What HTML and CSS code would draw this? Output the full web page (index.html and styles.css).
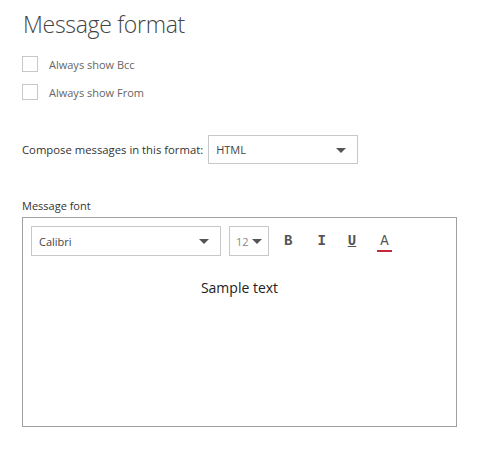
FILE: index.html
```html
<!DOCTYPE html>
<html lang="en">
<head>
    <meta charset="UTF-8">
    <title>Message format</title>
    <link rel="stylesheet" href="styles.css">
</head>
<body>
    <div class="page">
        <h1>Message format</h1>

        <label class="check"><span class="box"></span>Always show Bcc</label>
        <label class="check"><span class="box"></span>Always show From</label>

        <div class="compose">
            <span>Compose messages in this format:</span>
            <div class="select format">HTML<span class="caret"></span></div>
        </div>

        <div class="font-label">Message font</div>
        <div class="editor">
            <div class="toolbar">
                <div class="select family">Calibri<span class="caret"></span></div>
                <div class="select size">12<span class="caret"></span></div>
                <span class="tool bold">B</span>
                <span class="tool italic">I</span>
                <span class="tool under">U</span>
                <span class="tool color">A</span>
            </div>
            <div class="sample">Sample text</div>
        </div>
    </div>
</body>
</html>
```

FILE: styles.css
```css
body {
    margin: 0;
    font-family: "Open Sans", "Noto Sans", sans-serif;
    background: #fff;
    color: #333;
}
.page {
    padding: 8px 24px 0 22px;
}
h1 {
    font-size: 23px;
    font-weight: 300;
    color: #444;
    margin: 0 0 10px 1px;
    letter-spacing: -0.3px;
}
.check {
    display: flex;
    align-items: center;
    height: 28px;
    font-size: 11px;
    color: #666;
}
.box {
    width: 14px;
    height: 14px;
    border: 1px solid #c8c8c8;
    margin-right: 11px;
}
.compose {
    display: flex;
    align-items: center;
    gap: 5px;
    margin-top: 29px;
    font-size: 11.3px;
    color: #333;
}
.select {
    position: relative;
    box-sizing: border-box;
    border: 1px solid #c8c8c8;
    display: flex;
    align-items: center;
    font-size: 11px;
    color: #444;
}
.caret {
    position: absolute;
    right: 11px;
    top: 50%;
    margin-top: -2px;
    border-left: 5px solid transparent;
    border-right: 5px solid transparent;
    border-top: 5px solid #555;
}
.format {
    width: 150px;
    height: 29px;
    padding-left: 7px;
}
.font-label {
    margin-top: 34px;
    font-size: 11px;
    color: #333;
}
.editor {
    box-sizing: border-box;
    width: 435px;
    height: 210px;
    margin-top: 4px;
    border: 1px solid #a0a0a0;
    padding: 8px 8px;
}
.toolbar {
    display: flex;
    align-items: center;
}
.family {
    width: 190px;
    height: 30px;
    padding-left: 7px;
}
.size {
    width: 40px;
    height: 30px;
    margin-left: 8px;
    padding-left: 6px;
    color: #888;
}
.size .caret {
    right: 6px;
}
.tool {
    font-family: "Liberation Mono", "DejaVu Sans Mono", monospace;
    font-size: 14px;
    font-weight: bold;
    color: #555;
    margin-left: 22px;
    position: relative;
}
.bold {
    margin-left: 15px;
}
.italic {
    margin-left: 25px;
}
.under {
    text-decoration: underline;
}
.color {
    margin-left: 24px;
    font-weight: normal;
}
.color::after {
    content: "";
    position: absolute;
    left: -3px;
    right: -3px;
    bottom: -3px;
    height: 2px;
    background: #c4283c;
}
.sample {
    text-align: center;
    margin-top: 22px;
    font-size: 14px;
    color: #222;
}
```
